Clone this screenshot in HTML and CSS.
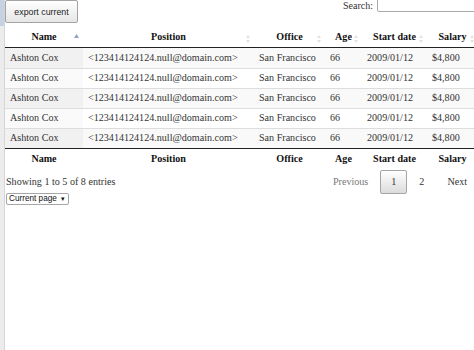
FILE: index.html
```html
<!DOCTYPE html>
<html>
<head>
<meta charset="utf-8">
<link rel="stylesheet" href="styles.css">
</head>
<body>
<div class="frame">
  <div class="strip"><div class="strip-top"></div></div>
  <div class="wrapper">
    <div class="top">
      <button class="dt-button">export current</button>
      <label class="search">Search:<input class="search-input" type="search"></label>
    </div>
    <table class="display">
      <colgroup>
        <col class="c-name"><col class="c-pos"><col class="c-office"><col class="c-age"><col class="c-date"><col class="c-sal">
      </colgroup>
      <thead>
        <tr>
          <th>Name<svg class="sort" width="5" height="4" viewBox="0 0 5 4"><path d="M0 4 L2.5 0 L5 4Z" fill="#8fa3c4"/></svg></th>
          <th>Position<svg class="sort" width="4" height="8" viewBox="0 0 4 8"><path d="M0 3 L2 0 L4 3Z M0 5 L2 8 L4 5Z" fill="#e2e2e2"/></svg></th>
          <th>Office<svg class="sort" width="4" height="8" viewBox="0 0 4 8"><path d="M0 3 L2 0 L4 3Z M0 5 L2 8 L4 5Z" fill="#e2e2e2"/></svg></th>
          <th>Age<svg class="sort" width="4" height="8" viewBox="0 0 4 8"><path d="M0 3 L2 0 L4 3Z M0 5 L2 8 L4 5Z" fill="#e2e2e2"/></svg></th>
          <th>Start date<svg class="sort" width="4" height="8" viewBox="0 0 4 8"><path d="M0 3 L2 0 L4 3Z M0 5 L2 8 L4 5Z" fill="#e2e2e2"/></svg></th>
          <th>Salary<svg class="sort" width="4" height="8" viewBox="0 0 4 8"><path d="M0 3 L2 0 L4 3Z M0 5 L2 8 L4 5Z" fill="#e2e2e2"/></svg></th>
        </tr>
      </thead>
      <tbody>
        <tr class="odd"><td class="sorted">Ashton Cox</td><td>&lt;123414124124.null@domain.com&gt;</td><td>San Francisco</td><td>66</td><td>2009/01/12</td><td>$4,800</td></tr>
        <tr class="even"><td class="sorted">Ashton Cox</td><td>&lt;123414124124.null@domain.com&gt;</td><td>San Francisco</td><td>66</td><td>2009/01/12</td><td>$4,800</td></tr>
        <tr class="odd"><td class="sorted">Ashton Cox</td><td>&lt;123414124124.null@domain.com&gt;</td><td>San Francisco</td><td>66</td><td>2009/01/12</td><td>$4,800</td></tr>
        <tr class="even"><td class="sorted">Ashton Cox</td><td>&lt;123414124124.null@domain.com&gt;</td><td>San Francisco</td><td>66</td><td>2009/01/12</td><td>$4,800</td></tr>
        <tr class="odd"><td class="sorted">Ashton Cox</td><td>&lt;123414124124.null@domain.com&gt;</td><td>San Francisco</td><td>66</td><td>2009/01/12</td><td>$4,800</td></tr>
      </tbody>
      <tfoot>
        <tr><th>Name</th><th>Position</th><th>Office</th><th>Age</th><th>Start date</th><th>Salary</th></tr>
      </tfoot>
    </table>
    <div class="bottom">
      <div class="bottom-left">
        <div class="info">Showing 1 to 5 of 8 entries</div>
        <div class="select">Current page<span class="caret">&#9662;</span></div>
      </div>
      <div class="paginate">
        <a class="pbtn disabled">Previous</a>
        <a class="pbtn current">1</a>
        <a class="pbtn">2</a>
        <a class="pbtn">Next</a>
      </div>
    </div>
  </div>
</div>
</body>
</html>
```

FILE: styles.css
```css
html, body {
  margin: 0;
  padding: 0;
  overflow: hidden;
  background: #fff;
  width: 474px;
  height: 350px;
}

.frame {
  display: flex;
  height: 350px;
  font-family: "Liberation Serif", serif;
  font-size: 10.1px;
  color: #333;
}

.strip {
  width: 4px;
  flex: none;
  background: #ececec;
  border-right: 1px solid #d6d6d6;
}

.strip-top {
  height: 26px;
  background: #c6d2e2;
}

.wrapper {
  width: 473px;
  flex: none;
  display: flex;
  flex-direction: column;
}

.top {
  height: 27px;
  display: flex;
  justify-content: space-between;
  align-items: flex-start;
}

.dt-button {
  height: 23px;
  width: 73px;
  padding: 0;
  margin: 0;
  border: 1px solid #a3a3a3;
  border-radius: 2px;
  background: linear-gradient(#ffffff, #e6e6e6);
  font-family: "Liberation Sans", sans-serif;
  font-size: 8.8px;
  color: #222;
}

.search {
  display: flex;
  align-items: flex-end;
  margin-top: -8px;
  margin-right: -3px;
  font-size: 10px;
  color: #333;
  line-height: 12px;
}

.search-input {
  width: 104px;
  height: 20px;
  box-sizing: border-box;
  margin: 0 0 0 4px;
  border: 1px solid #aaa;
  border-radius: 2px;
  background: #fff;
}

table.display {
  width: 473px;
  table-layout: fixed;
  border-collapse: collapse;
  border-spacing: 0;
}

.c-name { width: 78px; }
.c-pos { width: 171px; }
.c-office { width: 71px; }
.c-age { width: 37px; }
.c-date { width: 65px; }
.c-sal { width: 51px; }

table.display th {
  font-weight: bold;
  color: #111;
  text-align: center;
  padding: 4px 5px;
  line-height: 12px;
  position: relative;
  white-space: nowrap;
}

table.display thead th {
  border-bottom: 1px solid #222;
}

table.display tfoot th {
  border-top: 1px solid #222;
}

.sort {
  position: absolute;
  right: 4px;
  top: 8px;
}

table.display thead th:first-child .sort {
  top: 7px;
}

table.display td {
  padding: 3px 5px 4px;
  line-height: 12px;
  border-top: 1px solid #ddd;
  white-space: nowrap;
  overflow: hidden;
}

table.display tbody tr:first-child td {
  border-top: none;
  padding-top: 4px;
}

tr.odd td { background: #f9f9f9; }
tr.odd td.sorted { background: #f1f1f1; }
tr.even td { background: #fff; }
tr.even td.sorted { background: #fafafa; }

.bottom {
  display: flex;
  justify-content: space-between;
  align-items: flex-start;
}

.bottom-left {
  display: flex;
  flex-direction: column;
  align-items: flex-start;
  padding-left: 1px;
}

.info {
  padding-top: 7px;
  line-height: 12px;
}

.select {
  margin-top: 5px;
  height: 12px;
  box-sizing: border-box;
  border: 1px solid #a6a6a6;
  border-radius: 2px;
  padding: 0 3px 0 2px;
  font-family: "Liberation Sans", sans-serif;
  font-size: 8.2px;
  line-height: 10px;
  color: #111;
  display: flex;
  align-items: center;
}

.caret {
  font-size: 7px;
  margin-left: 4px;
}

.paginate {
  padding-top: 1px;
  display: flex;
}

.pbtn {
  display: block;
  padding: 5px 10px;
  margin-left: 1px;
  line-height: 12px;
  border: 1px solid transparent;
  border-radius: 2px;
  color: #333;
}

.pbtn.disabled {
  color: #777;
}

.pbtn.current {
  border-color: #a5a5a5;
  background: linear-gradient(#ffffff, #dcdcdc);
  color: #333;
}
```
